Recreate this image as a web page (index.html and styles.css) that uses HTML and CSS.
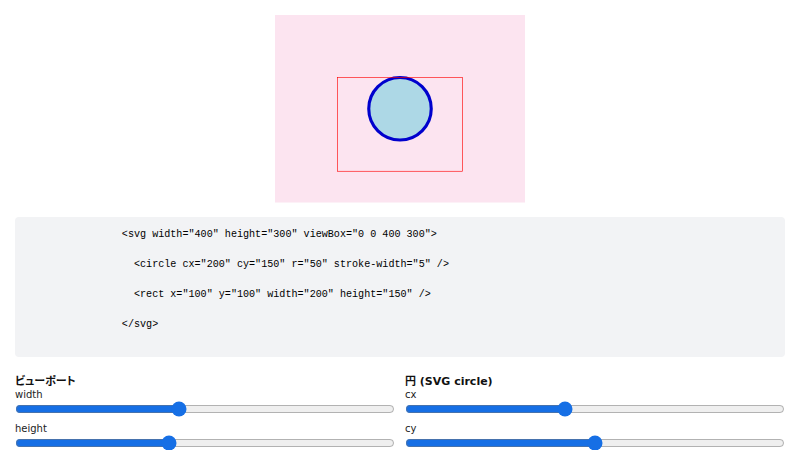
FILE: index.html
```html
<!DOCTYPE html>
<html lang="ja">
<head>
<meta charset="utf-8">
<link rel="stylesheet" href="styles.css">
</head>
<body>
<div class="page">
  <div class="stage">
    <svg class="canvas" width="250" height="187.5" viewBox="0 0 400 300">
      <rect x="0" y="0" width="400" height="300" fill="#fce4f0"/>
      <circle cx="200" cy="150" r="50" stroke-width="5" fill="lightblue" stroke="mediumblue"/>
      <rect x="100" y="100" width="200" height="150" fill="none" stroke="red" stroke-width="1"/>
    </svg>
  </div>
  <pre class="code">               &lt;svg width="400" height="300" viewBox="0 0 400 300"&gt;

                 &lt;circle cx="200" cy="150" r="50" stroke-width="5" /&gt;

                 &lt;rect x="100" y="100" width="200" height="150" /&gt;

               &lt;/svg&gt;

</pre>
  <div class="controls">
    <div class="group">
      <h3 class="group-title">ビューポート</h3>
      <label class="field">width
        <input class="slider" type="range" min="100" max="800" value="400">
      </label>
      <label class="field">height
        <input class="slider" type="range" min="100" max="600" value="300">
      </label>
    </div>
    <div class="group">
      <h3 class="group-title">円 (SVG circle)</h3>
      <label class="field">cx
        <input class="slider" type="range" min="0" max="480" value="200">
      </label>
      <label class="field">cy
        <input class="slider" type="range" min="0" max="300" value="150">
      </label>
    </div>
  </div>
</div>
</body>
</html>
```
FILE: styles.css
```css
html, body {
  margin: 0;
  padding: 0;
  background: #ffffff;
}
body {
  font-family: "DejaVu Sans", "Noto Sans CJK JP", sans-serif;
  color: #111;
}
.page {
  padding: 15px;
  display: flex;
  flex-direction: column;
}
.stage {
  display: flex;
  justify-content: center;
  height: 187px;
}
.canvas {
  display: block;
}
.code {
  margin: 15px 0 0 0;
  background: #f2f3f5;
  border-radius: 4px;
  padding: 10px 14px 10px 16px;
  font-family: "Liberation Mono", monospace;
  font-size: 10.1px;
  line-height: 15px;
  color: #000;
  white-space: pre;
}
.controls {
  display: grid;
  grid-template-columns: 1fr 1fr;
  column-gap: 10px;
  margin-top: 17px;
}
.group {
  display: flex;
  flex-direction: column;
}
.group-title {
  margin: 1px 0 -1px 0;
  font-size: 11px;
  font-weight: bold;
  line-height: 14px;
  font-feature-settings: "palt";
}
.field {
  display: flex;
  flex-direction: column;
  font-size: 10px;
  line-height: 13px;
  color: #222;
  margin-bottom: 1px;
}
.slider {
  width: 100%;
  margin: 0 0 4px 0;
  accent-color: #166fe5;
}
```
